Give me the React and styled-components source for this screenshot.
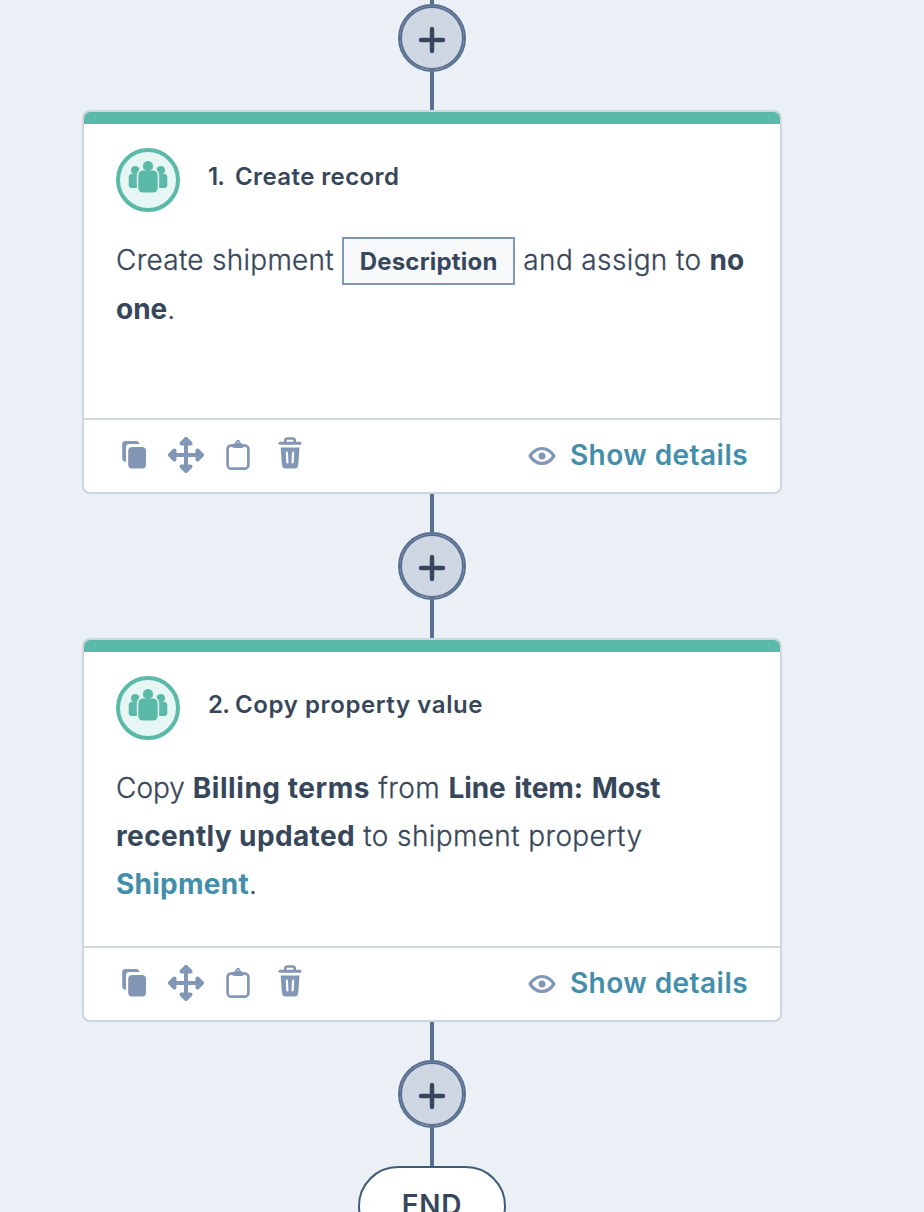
import React from "react";
import styled, { createGlobalStyle } from "styled-components";

const App = () => {
  return (
    <React.Fragment>
      <GlobalStyle />
      <Canvas>
        <Flow>
          <Line height={4} />
          <AddStep />
          <Line height={38} />
          <ActionCard step="1." title="Create record" titleSpacing="0.4px">
            <Text spacing="0.27px">Create shipment </Text>
            <Token>Description</Token>
            <Text spacing="0.36px"> and assign to </Text>
            <Strong spacing="0px">no one</Strong>
            <Text>.</Text>
          </ActionCard>
          <Line height={38} />
          <AddStep />
          <Line height={38} />
          <ActionCard step="2." title="Copy property value" titleSpacing="0.6px">
            <Text spacing="0px">Copy </Text>
            <Strong spacing="0.55px">Billing terms</Strong>
            <Text spacing="0.4px"> from </Text>
            <Strong spacing="-0.1px" words="2.2px">Line item: Most </Strong>
            <Strong spacing="0.38px">recently updated</Strong>
            <Text spacing="0.38px"> to shipment property </Text>
            <PropertyLink spacing="0.25px">Shipment</PropertyLink>
            <Text>.</Text>
          </ActionCard>
          <Line height={38} />
          <AddStep />
          <Line height={38} />
          <EndNode>END</EndNode>
        </Flow>
      </Canvas>
    </React.Fragment>
  );
};

const AddStep = () => (
  <AddButton aria-label="Add step">
    <svg width="28" height="28" viewBox="0 0 28 28">
      <path d="M14 3v22M3 14h22" stroke="#37475b" strokeWidth="4.4" strokeLinecap="round" />
    </svg>
  </AddButton>
);

const ActionCard = ({ step, title, titleSpacing, children }) => (
  <Card>
    <CardAccent />
    <CardBody>
      <CardHeader>
        <Badge>
          <PeopleIcon />
        </Badge>
        <CardTitle spacing={titleSpacing}>
          <StepNumber>{step}</StepNumber>
          {title}
        </CardTitle>
      </CardHeader>
      <Description>{children}</Description>
    </CardBody>
    <CardFooter>
      <Actions>
        <CopyIcon />
        <MoveIcon />
        <ClipboardIcon />
        <TrashIcon />
      </Actions>
      <DetailsButton>
        <EyeIcon />
        <span>Show details</span>
      </DetailsButton>
    </CardFooter>
  </Card>
);

const PeopleIcon = () => (
  <svg width="64" height="64" viewBox="0 0 64 64" fill="#5ab9a7">
    <circle cx="19.2" cy="22.3" r="4.3" />
    <rect x="12.7" y="26" width="12" height="14" rx="3" />
    <circle cx="44.8" cy="22.3" r="4.3" />
    <rect x="39.3" y="26" width="12" height="14" rx="3" />
    <g stroke="#e6f6f4" strokeWidth="3" paintOrder="stroke">
      <circle cx="32" cy="18.3" r="5" />
      <rect x="22.3" y="22.6" width="19.4" height="22" rx="4.5" />
    </g>
    <circle cx="32" cy="18.3" r="5" />
  </svg>
);

const CopyIcon = () => (
  <svg width="36" height="36" viewBox="0 0 36 36" fill="#8297b5">
    <path d="M9.5 4H20q2.8 0 3.4 3H13.5q-3.5 0-3.5 3.5v14.3Q6.2 24.5 6.2 21V7.3Q6.2 4 9.5 4z" />
    <rect x="12.2" y="10" width="17.8" height="21.5" rx="4" />
  </svg>
);

const MoveIcon = () => (
  <svg width="36" height="36" viewBox="0 0 36 36" fill="#8297b5">
    <path
      d="M18 6v24M6 18h24M13.5 6.5 18 2l4.5 4.5zM13.5 29.5 18 34l4.5-4.5zM6.5 13.5 2 18l4.5 4.5zM29.5 13.5 34 18l-4.5 4.5z"
      stroke="#8297b5"
      strokeWidth="4"
      strokeLinecap="round"
      strokeLinejoin="round"
    />
  </svg>
);

const ClipboardIcon = () => (
  <svg width="36" height="36" viewBox="0 0 36 36" fill="none">
    <rect x="7.6" y="8.3" width="20.8" height="23.4" rx="4" stroke="#8297b5" strokeWidth="2.7" />
    <path
      d="M12 7h1.5q1.7-.3 2.3-2.2Q16.5 2.8 18 2.8t2.2 2Q20.8 6.7 22.5 7H24v1.5q0 2.5-2.5 2.5h-7Q12 11 12 8.5z"
      fill="#8297b5"
    />
    <circle cx="18" cy="5.2" r="0.7" fill="#fff" />
  </svg>
);

const TrashIcon = () => (
  <svg width="36" height="36" viewBox="0 0 36 36" fill="none">
    <path d="M8 6.3h20" stroke="#8297b5" strokeWidth="3" strokeLinecap="round" />
    <path d="M13.3 6V3.5q0-2 2-2h5.4q2 0 2 2V6" stroke="#8297b5" strokeWidth="2.6" />
    <path d="M8.7 10.4h18.8l-1.2 17q-.3 4.2-4.5 4.2h-7.4q-4.2 0-4.5-4.2z" fill="#8297b5" />
    <path d="M14.9 15.5l.5 10M21.1 15.5l-.5 10" stroke="#fff" strokeWidth="2.2" strokeLinecap="round" />
  </svg>
);

const EyeIcon = () => (
  <svg width="28" height="20" viewBox="0 0 28 20" fill="none">
    <path
      d="M2 10Q7 2.5 14 2.5T26 10Q21 17.5 14 17.5T2 10z"
      stroke="#8297b5"
      strokeWidth="3.2"
      strokeLinejoin="round"
    />
    <circle cx="14" cy="10" r="3.5" fill="#8297b5" />
  </svg>
);

const GlobalStyle = createGlobalStyle`
  body {
    margin: 0;
    background: #eaf0f6;
    overflow: hidden;
  }
`;

const Canvas = styled.div`
  height: 1212px;
  overflow: hidden;
  background: #eaf0f6;
  color: #37475b;
  font-family: Inter, "Open Sans", sans-serif;
`;

const Flow = styled.div`
  display: flex;
  flex-direction: column;
  align-items: center;
  width: 700px;
  margin-left: 82px;
`;

const Line = styled.div`
  flex-shrink: 0;
  width: 4px;
  height: ${props => props.height}px;
  background: #586f90;
`;

const AddButton = styled.button`
  display: flex;
  align-items: center;
  justify-content: center;
  flex-shrink: 0;
  box-sizing: border-box;
  width: 68px;
  height: 68px;
  padding: 4px 0 0;
  border: 2px solid #586f90;
  border-radius: 50%;
  background: #cfd7e2;
  box-shadow: inset 0 0 0 2px #586f90;
`;

const Card = styled.section`
  display: flex;
  flex-direction: column;
  box-sizing: border-box;
  width: 700px;
  height: 384px;
  border: 2px solid #ced6e2;
  border-radius: 8px;
  background: #fff;
  overflow: hidden;
`;

const CardAccent = styled.div`
  height: 12px;
  background: #5ab9a7;
`;

const CardBody = styled.div`
  flex: 1;
  padding: 24px 32px 0;
`;

const CardHeader = styled.header`
  display: flex;
  gap: 28px;
`;

const Badge = styled.div`
  display: flex;
  align-items: center;
  justify-content: center;
  box-sizing: border-box;
  width: 64px;
  height: 64px;
  border: 4px solid #5ab9a7;
  border-radius: 50%;
  background: #e6f6f4;
  svg {
    flex-shrink: 0;
  }
`;

const CardTitle = styled.h4`
  display: flex;
  margin: 11px 0 0;
  font-size: 24px;
  font-weight: 600;
  line-height: 36px;
  letter-spacing: ${props => props.spacing};
`;

const StepNumber = styled.span`
  width: 27px;
  letter-spacing: -0.8px;
`;

const Description = styled.p`
  margin: 24px 0 0;
  font-size: 28px;
  font-weight: 300;
  line-height: 48px;
`;

const Text = styled.span`
  letter-spacing: ${props => props.spacing || "0"};
  -webkit-text-stroke: 0.3px currentColor;
`;

const Strong = styled.strong`
  font-weight: 700;
  letter-spacing: ${props => props.spacing};
  word-spacing: ${props => props.words || "0"};
`;

const PropertyLink = styled(Strong)`
  color: #428eab;
`;

const Token = styled.span`
  display: inline-block;
  box-sizing: border-box;
  width: 173px;
  height: 48px;
  border: 2px solid #8297b5;
  background: #f6f8fa;
  font-size: 24px;
  font-weight: 700;
  line-height: 46px;
  letter-spacing: 0.2px;
  text-align: center;
`;

const CardFooter = styled.footer`
  display: flex;
  align-items: center;
  justify-content: space-between;
  box-sizing: border-box;
  height: 74px;
  padding: 0 32px 2px;
  border-top: 2px solid #ced6e2;
`;

const Actions = styled.div`
  display: flex;
  gap: 16px;
`;

const DetailsButton = styled.div`
  display: flex;
  align-items: center;
  gap: 14px;
  color: #428eab;
  font-size: 28px;
  font-weight: 600;
  line-height: 36px;
  letter-spacing: 0.45px;
  svg {
    margin-top: 2px;
  }
`;

const EndNode = styled.div`
  flex-shrink: 0;
  box-sizing: border-box;
  width: 148px;
  height: 80px;
  border: 2px solid #425b76;
  border-radius: 40px;
  background: #fff;
  font-size: 28px;
  font-weight: 600;
  line-height: 74px;
  letter-spacing: 0.7px;
  text-align: center;
`;

export default App;
